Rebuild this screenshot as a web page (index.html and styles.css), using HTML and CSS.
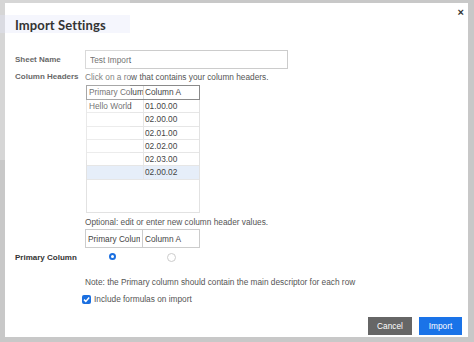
FILE: index.html
```html
<html>

<head>
  <title>Import Settings</title>
  <link rel="stylesheet" href="styles.css">
</head>

<body>
  <div class="ghost"></div>
  <div class="ghost-title"></div>

  <div class="dialog">
    <div class="close">&times;</div>
    <h1>Import Settings</h1>

    <div class="row row-name">
      <label>Sheet Name</label>
      <input class="text" type="text" value="Test Import">
    </div>

    <div class="row">
      <label>Column Headers</label>
      <div class="field">
        <div class="hint">Click on a row that contains your column headers.</div>
        <div class="grid">
          <div class="grid-row head"><span>Primary Column</span><span>Column A</span></div>
          <div class="grid-row"><span>Hello World</span><span>01.00.00</span></div>
          <div class="grid-row"><span></span><span>02.00.00</span></div>
          <div class="grid-row"><span></span><span>02.01.00</span></div>
          <div class="grid-row"><span></span><span>02.02.00</span></div>
          <div class="grid-row"><span></span><span>02.03.00</span></div>
          <div class="grid-row selected"><span></span><span>02.00.02</span></div>
        </div>
        <div class="hint optional">Optional: edit or enter new column header values.</div>
        <div class="headers">
          <input type="text" value="Primary Column">
          <input type="text" value="Column A">
        </div>
      </div>
    </div>

    <div class="row row-radio">
      <label>Primary Column</label>
      <div class="radios">
        <span class="radio on"></span>
        <span class="radio"></span>
      </div>
    </div>

    <div class="note">Note: the Primary column should contain the main descriptor for each row</div>

    <div class="check">
      <span class="box">
        <svg width="9" height="9" viewBox="0 0 9 9"><path d="M2 4.6 L3.8 6.4 L7.2 2.6" fill="none" stroke="#fff" stroke-width="1.5"/></svg>
      </span>
      Include formulas on import
    </div>

    <div class="actions">
      <button class="cancel">Cancel</button>
      <button class="import">Import</button>
    </div>
  </div>
</body>

</html>
```

FILE: styles.css
```css
body {
  margin: 0;
  background-color: #c8c8c8;
  font-family: "Liberation Sans", Arial, sans-serif;
  font-size: 8.3px;
  color: #444;
  height: 342px;
  overflow: hidden;
}

.ghost {
  position: absolute;
  left: 0;
  top: 0;
  width: 130px;
  height: 160px;
  background-color: rgba(255, 255, 255, 0.25);
  z-index: 2;
}

.ghost-title {
  position: absolute;
  left: 0;
  top: 15px;
  width: 130px;
  height: 18px;
  background-color: rgba(225, 228, 248, 0.35);
  z-index: 2;
}

.dialog {
  position: relative;
  margin: 3px 6px 0 5px;
  height: 334px;
  background-color: #fff;
  padding: 0 10px;
  box-sizing: border-box;
}

.close {
  position: absolute;
  right: 4px;
  top: 3px;
  font-size: 11px;
  color: #333;
  font-weight: bold;
}

h1 {
  position: relative;
  z-index: 3;
  margin: 0;
  padding-top: 14px;
  font-size: 13px;
  font-weight: 700;
  color: #333;
  font-family: "Lato", "Inter", sans-serif;
  letter-spacing: 0.1px;
}

.row {
  display: flex;
}

.row>label {
  width: 70px;
  flex-shrink: 0;
  font-weight: 700;
  color: #333;
  font-size: 8px;
}

.row-name {
  margin-top: 17px;
  align-items: center;
}

.text {
  width: 203px;
  height: 19px;
  border: 1px solid #ccc;
  font-family: inherit;
  font-size: 8.3px;
  color: #444;
  padding: 0 4px;
  box-sizing: border-box;
  outline: none;
}

.row-name+.row {
  margin-top: 2px;
}

.row-name+.row>label {
  line-height: 12px;
}

.hint {
  line-height: 12px;
  color: #555;
}

.grid {
  margin-top: 2px;
  margin-left: 1px;
  width: 114px;
  height: 128px;
  border: 1px solid #e2e2e2;
  border-top: none;
  box-sizing: border-box;
}

.grid-row {
  display: flex;
  height: 13.3px;
  border-bottom: 1px solid #e6e6e6;
  box-sizing: border-box;
}

.grid-row>span {
  width: 58px;
  padding-left: 2px;
  line-height: 12.3px;
  border-right: 1px solid #e6e6e6;
  white-space: nowrap;
  overflow: hidden;
  box-sizing: border-box;
}

.grid-row>span+span {
  width: 56px;
  padding-left: 1px;
  border-right: none;
}

.grid-row.head {
  height: 15px;
  border: 1px solid #8a8a8a;
  margin: 0 -1px 0 -1px;
}

.grid-row.head>span {
  line-height: 13px;
  border-right: 1px solid #ddd;
}

.grid-row.head>span+span {
  border-right: none;
}

.grid-row.selected {
  background-color: #e6eef9;
}

.optional {
  margin-top: 3px;
}

.headers {
  display: flex;
  margin-top: 1px;
}

.headers>input {
  width: 58px;
  height: 19px;
  border: 1px solid #ccc;
  font-family: inherit;
  font-size: 8.3px;
  color: #444;
  padding: 0 2px;
  box-sizing: border-box;
  outline: none;
}

.headers>input+input {
  margin-left: -1px;
}

.row-radio {
  margin-top: 5px;
  align-items: center;
}

.radios {
  display: flex;
  gap: 51px;
  padding-left: 24px;
}

.radio {
  width: 7px;
  height: 7px;
  border-radius: 50%;
  border: 1px solid #ccc;
}

.radio.on {
  border: 2.5px solid #1a6fe0;
  width: 3px;
  height: 3px;
}

.note {
  margin-top: 15px;
  margin-left: 70px;
  color: #555;
}

.check {
  margin-top: 7px;
  margin-left: 67px;
  display: flex;
  align-items: center;
  gap: 3px;
  color: #555;
}

.box {
  width: 9px;
  height: 9px;
  border-radius: 2px;
  background-color: #1a6fe0;
  display: flex;
}

.actions {
  display: flex;
  justify-content: flex-end;
  gap: 7px;
  margin-top: 13px;
  margin-right: -4px;
}

.actions>button {
  height: 18px;
  border: none;
  color: #fff;
  font-family: inherit;
  font-size: 8.3px;
  padding: 0;
}

.cancel {
  width: 44px;
  background-color: #666;
}

.import {
  width: 43px;
  background-color: #1a73e8;
}
```
